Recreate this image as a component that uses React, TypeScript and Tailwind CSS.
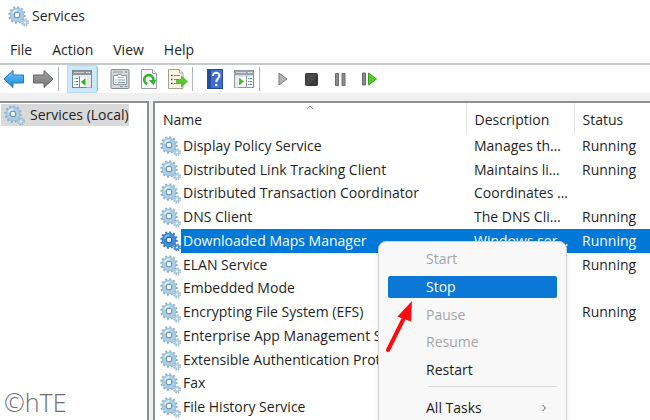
import type { ReactNode } from "react";

type Service = { name: string; description: string; status: string; selected?: boolean };

const services: Service[] = [
  { name: "Display Policy Service", description: "Manages th…", status: "Running" },
  { name: "Distributed Link Tracking Client", description: "Maintains li…", status: "Running" },
  { name: "Distributed Transaction Coordinator", description: "Coordinates …", status: "" },
  { name: "DNS Client", description: "The DNS Cli…", status: "Running" },
  { name: "Downloaded Maps Manager", description: "Windows ser…", status: "Running", selected: true },
  { name: "ELAN Service", description: "", status: "Running" },
  { name: "Embedded Mode", description: "", status: "" },
  { name: "Encrypting File System (EFS)", description: "", status: "Running" },
  { name: "Enterprise App Management Service", description: "", status: "" },
  { name: "Extensible Authentication Protocol", description: "", status: "" },
  { name: "Fax", description: "", status: "" },
  { name: "File History Service", description: "", status: "" },
];

function Gears({ selected = false }: { selected?: boolean }) {
  const teeth = selected ? "#3a7fc2" : "#93aec2";
  const body = selected ? "#3f8fdb" : "#a9cfe8";
  const rim = selected ? "#2a70b8" : "#8db4d0";
  return (
    <svg width="22" height="22" viewBox="0 0 22 22" fill="none" className="shrink-0" aria-hidden="true">
      <circle cx="9" cy="10" r="7.6" stroke={teeth} strokeWidth="2.2" strokeDasharray="2 1.98" />
      <circle cx="9" cy="10" r="5" stroke={body} strokeWidth="4" />
      <circle cx="9" cy="10" r="6.8" stroke={rim} strokeWidth="0.7" />
      <path d="M4.6 8.5a4.8 4.8 0 0 1 5-3.2" stroke={selected ? "#7fc0f5" : "#dcf0fb"} strokeWidth="1.6" />
      <circle cx="9" cy="10" r="2.800" fill={selected ? "#e8f3fd" : "#fbfdfe"} stroke={selected ? "#1f5fa3" : "#6d93b3"} strokeWidth="1.1" />
      <circle cx="17" cy="17.4" r="3.1" stroke={teeth} strokeWidth="1.7" strokeDasharray="1.4 1.03" />
      <circle cx="17" cy="17.4" r="1.8" stroke={body} strokeWidth="1.8" />
      <circle cx="17" cy="17.4" r="0.8" fill={selected ? "#dcecfb" : "#eef6fb"} />
    </svg>
  );
}

function Arrow({ dir }: { dir: "left" | "right" }) {
  const left = dir === "left";
  return (
    <svg width="22" height="20" viewBox="0 0 22 20" aria-hidden="true">
      <defs>
        <linearGradient id={"arrow-" + dir} x1="0" y1="0" x2="0" y2="1">
          <stop offset="0" stopColor={left ? "#6cc4fa" : "#a5a5a5"} />
          <stop offset="1" stopColor={left ? "#1787dc" : "#747474"} />
        </linearGradient>
      </defs>
      <path
        d={left ? "M1 10 10 1.5V6h10.5v8H10v4.500z" : "M21 10 12 1.500V6H1.500v8H12v4.500z"}
        fill={`url(#arrow-${dir})`}
        stroke={left ? "#2b78b8" : "#666"}
        strokeLinejoin="round"
      />
    </svg>
  );
}

function TreeWindow() {
  return (
    <svg width="20" height="18" viewBox="0 0 20 18" aria-hidden="true">
      <rect x=".5" y=".5" width="19" height="17" fill="#fff" stroke="#7d8790" />
      <path d="M1 1h18v4H1z" fill="#8b959e" />
      <path d="M2 2.500h10" stroke="#c4cbd1" />
      <path d="M14 2.500h1.500M16.500 2.500H18" stroke="#fff" />
      <path d="M1 6h18" stroke="#d3d8dc" />
      <path d="M7.500 6v11.500" stroke="#7d8790" />
      <path d="M2.500 8.500H6M2.500 11.500H6M2.500 14.500H6" stroke="#4b83bd" strokeDasharray="1 .5 3" />
      <path d="M9 12l4.500-4v8z" fill="#35b01c" />
      <path d="M14.500 6.500h4.500v11h-4.500z" fill="#e5e9ec" />
    </svg>
  );
}

function ActionWindow() {
  return (
    <svg width="20" height="18" viewBox="0 0 20 18" aria-hidden="true">
      <rect x=".5" y=".5" width="19" height="17" fill="#fff" stroke="#8f989f" />
      <path d="M1 1h18v4.500H1z" fill="#9aa3aa" />
      <path d="M2 2.500h10" stroke="#cdd3d8" />
      <path d="M14 2.500h1.500M16.500 2.500H18" stroke="#fff" />
      <path d="M1 6h18" stroke="#d3d8dc" />
      <path d="M12.500 6v11.500" stroke="#8f989f" />
      <path d="M1 6.500h3.500v11H1z" fill="#e8ebed" />
      <path d="M10 11.500l-5-4v8z" fill="#4fb52c" />
      <path d="M14 8.500h4M14 11.500h4M14 14.500h4" stroke="#4b83cd" strokeDasharray="1 .5 3" />
    </svg>
  );
}

function Properties() {
  return (
    <svg width="20" height="20" viewBox="0 0 20 20" fill="none" aria-hidden="true">
      <rect x="1" y=".5" width="18" height="19" rx="1" fill="#d5d8db" stroke="#858b90" />
      <path d="M3 3h10" stroke="#8f979e" />
      <path d="M15 3h2" stroke="#6d757c" />
      <path d="M3.500 6.500h4v-1h4v1h5v9h-13z" fill="#fff" stroke="#8796a3" />
      <path d="M8 8.500h6" stroke="#a9b4bd" />
      <path d="M5.500 11h1M5.500 13.500h1" stroke="#3f7fc4" />
      <path d="M8 11h7M8 13.500h7" stroke="#8793a0" />
      <path d="M10 17.500h3M14.500 17.500h3" stroke="#8f979e" />
    </svg>
  );
}

function Refresh() {
  return (
    <svg width="18" height="20" viewBox="0 0 18 20" fill="none" aria-hidden="true">
      <path d="M1.500.5h11l4 4v15h-15z" fill="#f7f8f8" stroke="#9a9fa3" />
      <path d="M12.500.5v4h4" fill="#fff" stroke="#9a9fa3" />
      <path d="M7.300 15A4.600 4.600 0 1 1 13.400 11" stroke="#3cae35" strokeWidth="2.600" />
      <path d="M8.800 11h7.400l-2.600 5.200z" fill="#3cae35" />
    </svg>
  );
}

function ExportList() {
  return (
    <svg width="20" height="20" viewBox="0 0 20 20" fill="none" aria-hidden="true">
      <path d="M.5.5h11l3.500 3.500v15.500H.5z" fill="#fbf8e6" stroke="#a3a18f" />
      <path d="M11.500.5V4H15" stroke="#a3a18f" fill="#fff" />
      <path d="M3 6.500h1.500M3 10.500h1.500M3 14.500h1.500" stroke="#444" strokeWidth="1.500" />
      <path d="M6 6.500h6M6 10.500h5M6 14.500h5" stroke="#86869c" />
      <path d="M8.500 10.500h5V7l6 5.500-6 5.500v-3.500h-5z" fill="#5acb2c" stroke="#48a827" strokeWidth=".6" />
    </svg>
  );
}

function Help() {
  return (
    <svg width="16" height="20" viewBox="0 0 16 20" fill="none" aria-hidden="true">
      <rect x=".5" y=".5" width="15" height="19" fill="#3e6fd0" stroke="#2a4c93" />
      <path d="M1 1h3v18H1z" fill="#254c9f" />
      <path d="M6 7c0-4.200 6.500-4.200 6.500-.5C12.500 9.500 9.300 9.500 9.300 13" stroke="#fff" strokeWidth="2" />
      <circle cx="9.300" cy="16" r="1.300" fill="#fff" />
    </svg>
  );
}

function Play() {
  return (
    <svg width="10" height="14" viewBox="0 0 10 14" aria-hidden="true">
      <path d="M1 1l8 6-8 6z" fill="#b5b5b5" stroke="#7b7b7b" strokeLinejoin="round" />
    </svg>
  );
}

function StopSquare() {
  return (
    <svg width="13" height="13" viewBox="0 0 13 13" aria-hidden="true">
      <rect x=".5" y=".5" width="12" height="12" rx="1" fill="#4a4a4a" stroke="#333" />
      <path d="M12 3v9H4z" fill="#3a3a3a" />
    </svg>
  );
}

function PauseBars() {
  return (
    <svg width="11" height="13" viewBox="0 0 11 13" fill="#8a8a8a" stroke="#6d6d6d" aria-hidden="true">
      <path d="M.5.5h3v12h-3zM7 .5h3v12H7z" />
    </svg>
  );
}

function RestartIcon() {
  return (
    <svg width="15" height="14" viewBox="0 0 15 14" aria-hidden="true">
      <path d="M.5 1h3v12h-3z" fill="#8a8a8a" stroke="#6d6d6d" />
      <path d="M6.500 1l8 6-8 6z" fill="#4fd02b" stroke="#39a01e" strokeLinejoin="round" />
    </svg>
  );
}

function Tool({ label, children }: { label: string; children: ReactNode }) {
  return (
    <button type="button" aria-label={label} className="flex h-7 w-[29px] items-center justify-center">
      {children}
    </button>
  );
}

function Divider() {
  return <span className="h-6 w-px bg-[#b4b8bb]" />;
}

function MenuItem({ label, disabled = false, active = false }: { label: string; disabled?: boolean; active?: boolean }) {
  const tone = active ? "bg-[#0a78d4] text-white" : disabled ? "text-[#a6a6a6]" : "text-[#1b1b1b]";
  return (
    <button
      type="button"
      role="menuitem"
      disabled={disabled}
      className={`flex h-[22px] w-full items-center rounded-xs pl-[38px] text-left ${tone}`}
    >
      {label}
    </button>
  );
}

function ContextMenu() {
  return (
    <div
      role="menu"
      className="absolute top-[241px] left-[378px] h-[200px] w-[189px] rounded-lg border border-[#d4d4d4] bg-[#f8f8f8] px-[9px] pt-1.5 shadow-md"
    >
      <div className="flex h-[133px] flex-col justify-between">
        <MenuItem label="Start" disabled />
        <MenuItem label="Stop" active />
        <MenuItem label="Pause" disabled />
        <MenuItem label="Resume" disabled />
        <MenuItem label="Restart" />
      </div>
      <hr className="mt-[5px] mb-2.5 ml-10 border-[#d9d9d9]" />
      <button type="button" role="menuitem" className="flex h-[22px] w-full items-center justify-between pr-2.5 pl-[38px] text-[#1b1b1b]">
        All Tasks
        <svg width="6" height="8" viewBox="0 0 6 8" fill="none" stroke="#555" aria-hidden="true">
          <path d="M1.500 1l3 3-3 3" />
        </svg>
      </button>
    </div>
  );
}

export default function App() {
  return (
    <div className="relative flex h-screen w-full flex-col overflow-hidden bg-[#f0f0f0] font-['Open_Sans','Noto_Sans',sans-serif] text-sm text-[#1f1f1f]">
      <header className="flex h-8 shrink-0 items-center gap-0.5 bg-white pl-2">
        <Gears />
        <h1>Services</h1>
      </header>

      <nav className="flex h-[31px] shrink-0 items-center gap-5 bg-white pt-1 pl-2.5">
        <button type="button">File</button>
        <button type="button">Action</button>
        <button type="button">View</button>
        <button type="button">Help</button>
      </nav>

      <div role="toolbar" aria-label="Services" className="flex h-[30px] shrink-0 items-center border-t-2 border-[#c6cacd] bg-white">
        <div className="-ml-px flex pr-px">
          <Tool label="Back"><Arrow dir="left" /></Tool>
          <Tool label="Forward"><Arrow dir="right" /></Tool>
        </div>
        <Divider />
        <button
          type="button"
          aria-label="Show console tree"
          aria-pressed="true"
          className="ml-2 flex h-7 w-[30px] items-center justify-center border border-[#b5dcf6] bg-[#cde8fb]"
        >
          <TreeWindow />
        </button>
        <Divider />
        <div className="flex pl-[7px]">
          <Tool label="Properties"><Properties /></Tool>
          <Tool label="Refresh"><Refresh /></Tool>
          <Tool label="Export list"><ExportList /></Tool>
        </div>
        <Divider />
        <div className="flex pr-px pl-[7px]">
          <Tool label="Help"><Help /></Tool>
          <Tool label="Show action pane"><ActionWindow /></Tool>
        </div>
        <Divider />
        <div className="flex px-2">
          <Tool label="Start service"><Play /></Tool>
          <Tool label="Stop service"><StopSquare /></Tool>
          <Tool label="Pause service"><PauseBars /></Tool>
          <Tool label="Restart service"><RestartIcon /></Tool>
        </div>
      </div>

      <main className="mt-2 flex min-h-0 flex-1 gap-1">
        <aside className="flex w-[149px] shrink-0 flex-col justify-between border-t-2 border-r-2 border-[#8c8f93] bg-white">
          <div className="mt-px mr-[18px] ml-px flex h-[22px] items-center gap-1 bg-[#d9d9d9] pl-[3px]">
            <Gears />
            <span className="whitespace-nowrap">Services (Local)</span>
          </div>
          <p className="pb-0.5 pl-1 text-[25px] leading-8 font-light text-[#6e6e6e]">©hTE</p>
        </aside>

        <section className="min-w-0 flex-1 overflow-hidden border-t-2 border-l-2 border-[#8c8f93] bg-white">
          <table className="h-[316px] w-full table-fixed border-collapse whitespace-nowrap">
            <colgroup>
              <col className="w-[311px]" />
              <col className="w-[108px]" />
              <col />
            </colgroup>
            <thead>
              <tr className="h-[31px] text-left">
                <th className="relative border-r border-[#e5e5e5] p-0 pt-0.5 pl-2 font-normal">
                  Name
                  <svg className="absolute top-0.5 left-1/2 -ml-1" width="8" height="5" viewBox="0 0 8 5" fill="none" stroke="#8a8a8a" aria-hidden="true">
                    <path d="M1 4l3-3 3 3" />
                  </svg>
                </th>
                <th className="border-r border-[#e5e5e5] p-0 pt-0.5 pl-2 font-normal">Description</th>
                <th className="p-0 pt-0.5 pl-2 font-normal">Status</th>
              </tr>
            </thead>
            <tbody>
              {services.map((s) => (
                <tr key={s.name} className={s.selected ? "bg-[#0078d7] text-white" : ""}>
                  <td className="h-[23px] overflow-hidden p-0">
                    <div className="flex h-[23px] items-center">
                      <span className="flex h-6 w-[26px] shrink-0 items-center bg-white pl-[5px]">
                        <Gears selected={s.selected} />
                      </span>
                      <span className="pl-0.5">{s.name}</span>
                    </div>
                  </td>
                  <td className="h-[23px] overflow-hidden p-0 pl-2">{s.description}</td>
                  <td className="h-[23px] overflow-hidden p-0 pl-2">{s.status}</td>
                </tr>
              ))}
            </tbody>
          </table>
        </section>
      </main>

      <ContextMenu />

      <svg className="absolute top-[300px] left-[384px]" width="32" height="54" viewBox="0 0 32 54" aria-hidden="true">
        <path d="M4 50L19 20" stroke="#fb0d0d" strokeWidth="4" strokeLinecap="round" />
        <path d="M28 1L13.500 16.500l5 2 8.500 3z" fill="#fb0d0d" />
      </svg>
    </div>
  );
}
